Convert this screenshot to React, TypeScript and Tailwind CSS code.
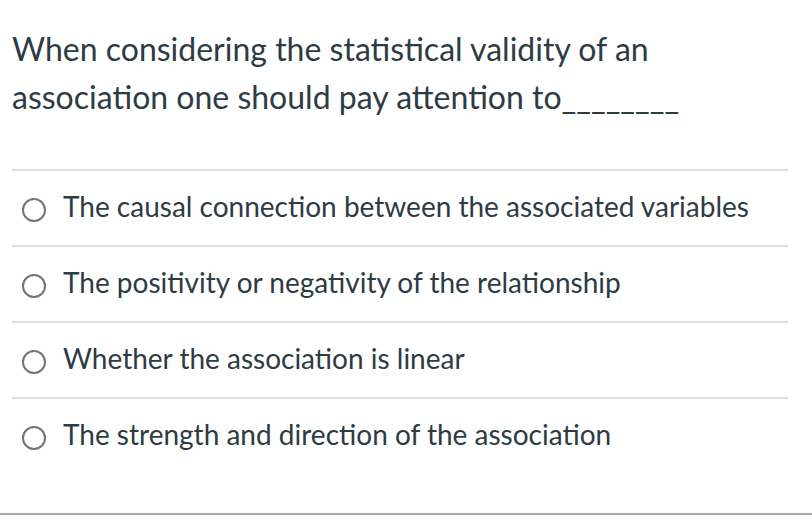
export default function App() {
  const options = [
    'The causal connection between the associated variables',
    'The positivity or negativity of the relationship',
    'Whether the association is linear',
    'The strength and direction of the association',
  ];

  return (
    <div className="w-[812px] h-[520px] bg-white text-[#2d3b45] font-['Lato',sans-serif] overflow-hidden">
      <div className="pl-[12px] pr-[24px]">
        <div className="pt-[25px] text-[32px] leading-[48px]">
          When considering the statistical validity of an
          <br />
          association one should pay attention to________
        </div>

        <div className="mt-[48px]">
          {options.map((opt) => (
            <div key={opt} className="h-[76px] border-t-2 border-[#ddd] flex items-center">
              <span className="ml-[10px] mt-[3px] w-[24px] h-[24px] rounded-full border-2 border-[#737373] shrink-0" />
              <span className="ml-[17px] pb-[5px] text-[28px]">{opt}</span>
            </div>
          ))}
        </div>
      </div>
      <div className="mt-[40px] h-[2px] bg-[#aaa]" />
    </div>
  );
}
